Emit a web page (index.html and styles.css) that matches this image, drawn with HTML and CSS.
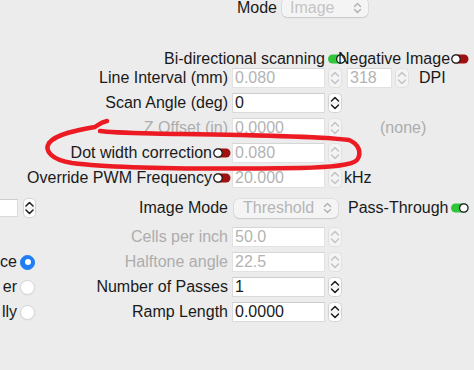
FILE: index.html
```html
<!DOCTYPE html>
<html>
<head>
<meta charset="utf-8">
<link rel="stylesheet" href="styles.css">
</head>
<body>
<div class="panel">
  <div class="row row-mode">
    <div class="lcell lcell-mode"><span class="lbl">Mode</span></div>
    <div class="popup popup-mode"><span>Image</span>
      <svg class="pchev" width="9" height="12" viewBox="0 0 9 12"><path d="M1.5 4.5 L4.5 1.5 L7.5 4.5 M1.5 7.5 L4.5 10.5 L7.5 7.5"/></svg>
    </div>
  </div>

  <div class="row row-bidir">
    <div class="lcell lcell-bidir"><span class="lbl">Bi-directional scanning</span></div>
    <svg class="tog tog-bidir" width="18" height="10" viewBox="0 0 18 10"><rect x="0" y="0.5" width="17.5" height="9" rx="4.5" fill="#2fc63c"/><circle cx="12.8" cy="5" r="4.2" fill="#fff" stroke="#1a1a1a" stroke-width="1.2"/></svg>
    <span class="lbl">Negative Image</span>
    <svg class="tog tog-neg" width="18" height="10" viewBox="0 0 18 10"><rect x="0.5" y="0.5" width="17" height="9" rx="4.5" fill="#a10f10"/><circle cx="5" cy="5" r="4.2" fill="#fff" stroke="#1a1a1a" stroke-width="1.2"/></svg>
  </div>

  <div class="row row-li">
    <div class="lcell"><span class="lbl">Line Interval (mm)</span></div>
    <div class="field dis">0.080</div>
    <svg class="stp dis" width="14" height="20" viewBox="0 0 14 20"><rect x="0.5" y="0.5" width="13" height="19" rx="4"/><path d="M3.5 8 L7 4.5 L10.5 8 M3.5 12 L7 15.5 L10.5 12"/></svg>
    <div class="field field-sm dis">318</div>
    <svg class="stp dis" width="14" height="20" viewBox="0 0 14 20"><rect x="0.5" y="0.5" width="13" height="19" rx="4"/><path d="M3.5 8 L7 4.5 L10.5 8 M3.5 12 L7 15.5 L10.5 12"/></svg>
    <span class="lbl unit-dpi">DPI</span>
  </div>

  <div class="row">
    <div class="lcell"><span class="lbl">Scan Angle (deg)</span></div>
    <div class="field">0</div>
    <svg class="stp" width="14" height="20" viewBox="0 0 14 20"><rect x="0.5" y="0.5" width="13" height="19" rx="4"/><line x1="1" y1="10" x2="13" y2="10"/><path d="M3.5 8 L7 4.5 L10.5 8 M3.5 12 L7 15.5 L10.5 12"/></svg>
  </div>

  <div class="row">
    <div class="lcell"><span class="lbl dim">Z Offset (in)</span></div>
    <div class="field dis">0.0000</div>
    <svg class="stp dis" width="14" height="20" viewBox="0 0 14 20"><rect x="0.5" y="0.5" width="13" height="19" rx="4"/><path d="M3.5 8 L7 4.5 L10.5 8 M3.5 12 L7 15.5 L10.5 12"/></svg>
    <span class="lbl dim unit-none">(none)</span>
  </div>

  <div class="row">
    <div class="lcell"><span class="lbl lbl-tog">Dot width correction</span>
      <svg class="tog" width="18" height="10" viewBox="0 0 18 10"><rect x="0.5" y="0.5" width="17" height="9" rx="4.5" fill="#a10f10"/><circle cx="5" cy="5" r="4.2" fill="#fff" stroke="#1a1a1a" stroke-width="1.2"/></svg>
    </div>
    <div class="field dis">0.080</div>
    <svg class="stp dis" width="14" height="20" viewBox="0 0 14 20"><rect x="0.5" y="0.5" width="13" height="19" rx="4"/><path d="M3.5 8 L7 4.5 L10.5 8 M3.5 12 L7 15.5 L10.5 12"/></svg>
  </div>

  <div class="row">
    <div class="lcell"><span class="lbl lbl-tog">Override PWM Frequency</span>
      <svg class="tog" width="18" height="10" viewBox="0 0 18 10"><rect x="0.5" y="0.5" width="17" height="9" rx="4.5" fill="#a10f10"/><circle cx="5" cy="5" r="4.2" fill="#fff" stroke="#1a1a1a" stroke-width="1.2"/></svg>
    </div>
    <div class="field dis">20.000</div>
    <svg class="stp dis" width="14" height="20" viewBox="0 0 14 20"><rect x="0.5" y="0.5" width="13" height="19" rx="4"/><path d="M3.5 8 L7 4.5 L10.5 8 M3.5 12 L7 15.5 L10.5 12"/></svg>
    <span class="lbl unit-khz">kHz</span>
  </div>

  <div class="row row-im">
    <div class="lcell lcell-split">
      <div class="lgrp-field">
        <div class="mini-field"></div>
        <svg class="stp stp-mini" width="13" height="20" viewBox="0 0 13 20"><rect x="0.5" y="0.5" width="12" height="19" rx="4"/><line x1="1" y1="10" x2="12" y2="10"/><path d="M3 8 L6.5 4.5 L10 8 M3 12 L6.5 15.5 L10 12"/></svg>
      </div>
      <span class="lbl">Image Mode</span>
    </div>
    <div class="popup popup-im"><span>Threshold</span>
      <svg class="pchev" width="9" height="12" viewBox="0 0 9 12"><path d="M1.5 4.5 L4.5 1.5 L7.5 4.5 M1.5 7.5 L4.5 10.5 L7.5 7.5"/></svg>
    </div>
    <span class="lbl pass">Pass-Through</span>
    <svg class="tog tog-pass" width="18" height="10" viewBox="0 0 18 10"><rect x="0" y="0.5" width="17.5" height="9" rx="4.5" fill="#2fc63c"/><circle cx="12.8" cy="5" r="4.2" fill="#fff" stroke="#1a1a1a" stroke-width="1.2"/></svg>
  </div>

  <div class="row row-cells">
    <div class="lcell"><span class="lbl dim">Cells per inch</span></div>
    <div class="field dis">50.0</div>
    <svg class="stp dis" width="14" height="20" viewBox="0 0 14 20"><rect x="0.5" y="0.5" width="13" height="19" rx="4"/><path d="M3.5 8 L7 4.5 L10.5 8 M3.5 12 L7 15.5 L10.5 12"/></svg>
  </div>

  <div class="row">
    <div class="lcell lcell-split">
      <div class="lgrp"><span class="lbl">ce</span><span class="radio on"></span></div>
      <span class="lbl dim">Halftone angle</span>
    </div>
    <div class="field dis">22.5</div>
    <svg class="stp dis" width="14" height="20" viewBox="0 0 14 20"><rect x="0.5" y="0.5" width="13" height="19" rx="4"/><path d="M3.5 8 L7 4.5 L10.5 8 M3.5 12 L7 15.5 L10.5 12"/></svg>
  </div>

  <div class="row">
    <div class="lcell lcell-split">
      <div class="lgrp"><span class="lbl">er</span><span class="radio"></span></div>
      <span class="lbl">Number of Passes</span>
    </div>
    <div class="field">1</div>
    <svg class="stp" width="14" height="20" viewBox="0 0 14 20"><rect x="0.5" y="0.5" width="13" height="19" rx="4"/><line x1="1" y1="10" x2="13" y2="10"/><path d="M3.5 8 L7 4.5 L10.5 8 M3.5 12 L7 15.5 L10.5 12"/></svg>
  </div>

  <div class="row">
    <div class="lcell lcell-split">
      <div class="lgrp"><span class="lbl">lly</span><span class="radio"></span></div>
      <span class="lbl">Ramp Length</span>
    </div>
    <div class="field">0.0000</div>
    <svg class="stp" width="14" height="20" viewBox="0 0 14 20"><rect x="0.5" y="0.5" width="13" height="19" rx="4"/><line x1="1" y1="10" x2="13" y2="10"/><path d="M3.5 8 L7 4.5 L10.5 8 M3.5 12 L7 15.5 L10.5 12"/></svg>
  </div>
</div>

<svg class="annot" width="474" height="370" viewBox="0 0 474 370">
  <path d="M107 121 C101 122 98 125 95 127 C78 130 56 134 49 143 C44 151 52 160 72 163 C120 169 230 169 300 168 C335 167 352 165 357 160 C362 153 359 144 349 140 C320 136 250 135 180 134 C140 133 112 133 100 131"/>
</svg>
</body>
</html>
```

FILE: styles.css
```css
html, body {
  margin: 0;
  padding: 0;
}
body {
  width: 474px;
  height: 370px;
  overflow: hidden;
  background: #ececec;
  font-family: "Liberation Sans", Arial, sans-serif;
  font-size: 16px;
  color: #1a1a1a;
  position: relative;
}
.panel {
  display: flex;
  flex-direction: column;
}
.row {
  display: flex;
  align-items: center;
  height: 20px;
  margin-top: 5px;
  flex-shrink: 0;
}
.row-mode {
  height: 19px;
  margin-top: -2px;
}
.row-bidir {
  height: 18px;
  margin-top: 33px;
}
.row-li {
  margin-top: 0;
}
.row-im {
  margin-top: 10px;
}
.row-cells {
  margin-top: 9px;
}
.lbl {
  white-space: nowrap;
  line-height: 18px;
}
.dim {
  color: #adadad;
}
.lcell {
  width: 231px;
  flex-shrink: 0;
  display: flex;
  justify-content: flex-end;
  align-items: center;
}
.lcell > .lbl {
  margin-right: 3px;
}
.lcell > .lbl.lbl-tog {
  margin-right: 1px;
}
.lcell-mode {
  width: 277px;
}
.lcell-mode > .lbl,
.lcell-bidir > .lbl {
  margin-right: 0;
}
.lcell-bidir {
  width: 325px;
}
.lcell-split {
  justify-content: space-between;
}
.tog {
  flex-shrink: 0;
  display: block;
}
.tog-bidir {
  margin-left: 3px;
  margin-right: -8px;
}
.tog-neg {
  margin-left: 1px;
}
.tog-pass {
  margin-left: 2px;
}
.field {
  width: 93px;
  height: 20px;
  box-sizing: border-box;
  margin-left: 1px;
  padding-left: 2px;
  background: #fff;
  border: 1px solid #dadada;
  border-top-color: #cdcdcd;
  display: flex;
  align-items: center;
  line-height: 18px;
  color: #1a1a1a;
  flex-shrink: 0;
}
.field.dis {
  color: #b3b3b3;
  border-color: #e2e2e2;
  border-top-color: #d6d6d6;
}
.field-sm {
  width: 45px;
  margin-left: 5px;
}
.stp {
  display: block;
  flex-shrink: 0;
  margin-left: 3px;
}
.stp rect {
  fill: #ffffff;
  stroke: #d2d2d2;
  stroke-width: 1;
}
.stp line {
  stroke: #e4e4e4;
  stroke-width: 1;
}
.stp path {
  fill: none;
  stroke: #222;
  stroke-width: 1.6;
  stroke-linecap: round;
  stroke-linejoin: round;
}
.stp.dis rect {
  fill: #f4f4f4;
  stroke: #e0e0e0;
}
.stp.dis path {
  stroke: #c6c6c6;
}
.unit-dpi {
  margin-left: 10px;
}
.unit-none {
  margin-left: 38px;
}
.unit-khz {
  margin-left: 2px;
}
.popup {
  height: 19px;
  box-sizing: border-box;
  border-radius: 5px;
  background: #f4f4f4;
  box-shadow: 0 0 0 0.5px rgba(0, 0, 0, 0.10), 0 1px 1.5px rgba(0, 0, 0, 0.10);
  display: flex;
  align-items: center;
  justify-content: space-between;
  color: #b5b5b5;
  line-height: 18px;
  flex-shrink: 0;
}
.popup-mode {
  width: 86px;
  margin-left: 5px;
  padding: 0 6px 0 8px;
  color: #c4c4c4;
}
.popup-im {
  width: 104px;
  margin-left: 3px;
  padding: 0 6px 0 9px;
}
.pchev {
  display: block;
}
.pchev path {
  fill: none;
  stroke: #b0b0b0;
  stroke-width: 1.4;
  stroke-linecap: round;
  stroke-linejoin: round;
}
.pass {
  margin-left: 10px;
}
.lgrp-field {
  display: flex;
  align-items: center;
}
.mini-field {
  width: 18px;
  height: 18px;
  box-sizing: border-box;
  background: #fff;
  border: 1px solid #dadada;
  border-left: none;
  border-top-color: #cdcdcd;
}
.stp-mini {
  margin-left: 5px;
}
.lgrp {
  width: 35px;
  display: flex;
  justify-content: flex-end;
  align-items: center;
  gap: 3px;
}
.radio {
  width: 15px;
  height: 15px;
  box-sizing: border-box;
  border-radius: 50%;
  background: #fff;
  border: 1px solid #d4d4d4;
  box-shadow: 0 0.5px 1px rgba(0, 0, 0, 0.06);
  flex-shrink: 0;
  display: flex;
  align-items: center;
  justify-content: center;
}
.radio.on {
  background: #1f7ef5;
  border-color: #1f7ef5;
}
.radio.on::after {
  content: "";
  width: 6px;
  height: 6px;
  border-radius: 50%;
  background: #fff;
}
.annot {
  position: absolute;
  left: 0;
  top: 0;
  pointer-events: none;
}
.annot path {
  fill: none;
  stroke: #ec1a22;
  stroke-width: 4.5;
  stroke-linecap: round;
  stroke-linejoin: round;
}
```
